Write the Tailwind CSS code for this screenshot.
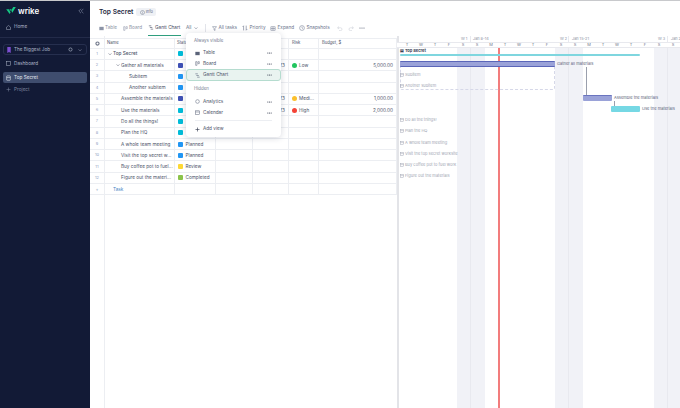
<!DOCTYPE html>
<html>
<head>
<meta charset="utf-8">
<script src="https://cdn.jsdelivr.net/npm/@tailwindcss/browser@4"></script>
</head>
<body class="font-['Inter',sans-serif] overflow-hidden">
<div class="relative w-[680px] h-[408px] flex border-t border-[#c8c9cc] bg-white text-[4.7px] text-[#3a4154] overflow-hidden">

  <!-- sidebar -->
  <aside class="w-[90px] shrink-0 bg-[#121a36] text-[#aeb6c8] flex flex-col px-[3px]">
    <div class="h-[19px] flex items-center justify-between pl-[3px] pr-[3px]">
      <div class="flex items-center gap-[2px]">
        <svg class="w-[10px] h-[7px]" viewBox="0 0 11 8"><path d="M0 2.5h3.2L5 6.2 4 8z" fill="#16c784"/><path d="M3.6 2.5h2.6L5.4 4.6zM6.6 2.5 8 0h3L7 6.6 5.9 4.2z" fill="#16c784"/></svg>
        <span class="text-[8px] font-semibold text-white leading-none">wrike</span>
      </div>
      <svg class="w-[6px] h-[6px] text-[#8791a8]" viewBox="0 0 6 6" fill="none" stroke="currentColor" stroke-width=".6"><path d="M3 .8.8 3 3 5.2M5.4.8 3.2 3l2.2 2.2"/></svg>
    </div>
    <div class="h-[14px] flex items-center gap-[3px] pl-[3px]">
      <svg class="w-[5px] h-[5px]" viewBox="0 0 6 6" fill="none" stroke="currentColor" stroke-width=".6"><path d="M.6 2.6 3 .6l2.4 2v2.8H.6z"/></svg>
      <span>Home</span>
    </div>
    <div class="h-px bg-[#232b49] mt-[3px] -mx-[3px]"></div>
    <div class="mt-[6px] h-[11px] rounded-[3px] border border-[#262f4e] flex items-center pl-[3px] pr-[4px] gap-[3px]">
      <svg class="w-[4px] h-[6px]" viewBox="0 0 4 6"><path d="M.3 0h3.4v6L2 5 .3 6z" fill="#7c4fd0"/></svg>
      <span class="grow">The Biggest Job</span>
      <svg class="w-[5px] h-[5px]" viewBox="0 0 6 6" fill="none" stroke="currentColor" stroke-width=".8"><circle cx="3" cy="3" r="1.9"/></svg>
      <svg class="w-[4px] h-[4px] ml-[2px]" viewBox="0 0 4 4" fill="none" stroke="currentColor" stroke-width=".5"><path d="M.6 1.4 2 2.8l1.4-1.4"/></svg>
    </div>
    <div class="mt-[3px] h-[11px] flex items-center gap-[3px] pl-[3px]">
      <svg class="w-[5px] h-[5px]" viewBox="0 0 6 6" fill="none" stroke="currentColor" stroke-width=".6"><rect x=".8" y=".6" width="4.4" height="4.8"/></svg>
      <span>Dashboard</span>
    </div>
    <div class="mt-[3px] h-[11px] rounded-[2px] bg-[#3f4d6e] text-[#e4e8f0] flex items-center gap-[3px] pl-[3px]">
      <svg class="w-[5px] h-[6px]" viewBox="0 0 6 7" fill="none" stroke="currentColor" stroke-width=".7"><rect x=".8" y="1" width="4.4" height="5.2" rx=".5"/><path d="M.8 3h4.4"/></svg>
      <span>Top Secret</span>
    </div>
    <div class="mt-[1px] h-[11px] flex items-center gap-[3px] pl-[3px] text-[#7d869e]">
      <svg class="w-[5px] h-[5px]" viewBox="0 0 6 6" fill="none" stroke="currentColor" stroke-width=".6"><path d="M3 .6v4.8M.6 3h4.8"/></svg>
      <span>Project</span>
    </div>
  </aside>

  <!-- main -->
  <main class="grow min-w-0 flex flex-col">
    <div class="h-[19px] pl-[9px] flex items-end gap-[3px]">
      <h1 class="text-[6.6px] font-semibold text-[#1f2a44] leading-[13px] mb-[1px]">Top Secret</h1>
      <div class="h-[8px] w-[20px] mb-[4px] rounded-[2px] bg-[#eff1f5] flex items-center justify-center gap-[1px] text-[4px] text-[#5a6378]">
        <svg class="w-[5px] h-[5px]" viewBox="0 0 6 6" fill="none" stroke="currentColor" stroke-width=".5"><circle cx="3" cy="3" r="2.4"/><path d="M3 2.6v1.8M3 1.5v.5"/></svg>
        <span>Info</span>
      </div>
    </div>

    <!-- toolbar -->
    <div class="h-[16px] pl-[7px] flex items-stretch text-[#69728a] whitespace-nowrap">
      <div class="flex items-center gap-[1px] w-[26px] pl-[2px] text-[#8b93a6]">
        <svg class="w-[5px] h-[5px]" viewBox="0 0 6 6" fill="currentColor"><path d="M.4 1h5.2v4H.4z"/></svg><span>Table</span>
      </div>
      <div class="flex items-center gap-[1px] w-[25px] text-[#8b93a6]">
        <svg class="w-[5px] h-[5px]" viewBox="0 0 6 6" fill="none" stroke="currentColor" stroke-width=".6"><path d="M.8.8h1.6v4.4H.8zM3.6.8h1.6v2.4H3.6z"/></svg><span>Board</span>
      </div>
      <div class="flex items-center gap-[1px] w-[33px] border-b border-[#2f9e7e] text-[#3f485e]">
        <svg class="w-[6px] h-[5px]" viewBox="0 0 6 6" fill="none" stroke="currentColor" stroke-width=".7"><path d="M.4 1h3M1.6 3h3M2.6 5h3"/></svg><span>Gantt Chart</span>
      </div>
      <div class="flex items-center gap-[2px] ml-[5px] w-[14px]">
        <span>All</span>
        <svg class="w-[4px] h-[4px]" viewBox="0 0 4 4" fill="none" stroke="currentColor" stroke-width=".6"><path d="M.6 1.4 2 2.8l1.4-1.4"/></svg>
      </div>
      <div class="w-px h-[8px] self-center bg-[#e2e4ea] mr-[6px] ml-[5px]"></div>
      <div class="flex items-center gap-[1.5px] w-[30px]">
        <svg class="w-[5px] h-[5px]" viewBox="0 0 6 6" fill="none" stroke="currentColor" stroke-width=".6"><path d="M.6.8h4.8L3.6 3v2.4L2.4 4.6V3z"/></svg><span>All tasks</span>
      </div>
      <div class="flex items-center gap-[1.5px] w-[28px]">
        <svg class="w-[6px] h-[6px]" viewBox="0 0 6 6" fill="none" stroke="currentColor" stroke-width=".6"><path d="M1.6 5.4V.8L.6 1.8M4.2.6v4.6l1-1"/></svg><span>Priority</span>
      </div>
      <div class="flex items-center gap-[1.5px] w-[29px]">
        <svg class="w-[6px] h-[5px]" viewBox="0 0 6 6" fill="none" stroke="currentColor" stroke-width=".6"><rect x=".5" y="1" width="5" height="4"/><path d="M.5 3h5M3 1v4"/></svg><span>Expand</span>
      </div>
      <div class="flex items-center gap-[1.5px] w-[38px]">
        <svg class="w-[6px] h-[6px]" viewBox="0 0 6 6" fill="none" stroke="currentColor" stroke-width=".5"><circle cx="3" cy="3" r="2.4"/><path d="M3 1.6V3l1 .6"/></svg><span>Snapshots</span>
      </div>
      <div class="flex items-center gap-[5px] text-[#c4c8d2]">
        <svg class="w-[6px] h-[5px]" viewBox="0 0 6 5" fill="none" stroke="currentColor" stroke-width=".5"><path d="M2 .5.6 1.8 2 3M.6 1.8h3a1.4 1.4 0 0 1 0 2.8H2"/></svg>
        <svg class="w-[6px] h-[5px]" viewBox="0 0 6 5" fill="none" stroke="currentColor" stroke-width=".5"><path d="M4 .5l1.4 1.3L4 3M5.4 1.8h-3a1.4 1.4 0 0 0 0 2.8H4"/></svg>
        <svg class="w-[6px] h-[2px] text-[#5a6378]" viewBox="0 0 6 2" fill="currentColor"><circle cx="1" cy="1" r=".6"/><circle cx="3" cy="1" r=".6"/><circle cx="5" cy="1" r=".6"/></svg>
      </div>
    </div>

    <div class="grow flex min-h-0">
      <!-- table -->
      <section class="w-[307px] shrink-0 relative pt-[1.5px]">
        <div id="table" class="text-[#4a5268]"></div>
        <div class="absolute left-[14px] top-0 bottom-0 w-px bg-[#eceef2]"></div>
      </section>

      <!-- gantt -->
      <section class="grow relative overflow-hidden">
        <div class="absolute left-0 top-0 bottom-0 w-[1.5px] bg-[#e3e4e8]"></div>
        <div class="absolute left-[60px] w-[28px] top-[12px] bottom-0 bg-[#f1f2f7]"></div>
        <div class="absolute left-[158px] w-[28px] top-[12px] bottom-0 bg-[#f1f2f7]"></div>
        <div class="absolute left-[257px] w-[28px] top-[12px] bottom-0 bg-[#f1f2f7]"></div>
        <div class="absolute left-[73px] top-0 bottom-0 w-px bg-[#e8e9ef]"></div>
        <div class="absolute left-[171px] top-0 bottom-0 w-px bg-[#e8e9ef]"></div>
        <div class="absolute left-[270px] top-0 bottom-0 w-px bg-[#e8e9ef]"></div>
        <div class="absolute left-[101px] top-[12px] bottom-0 w-[1.5px] bg-[#f27c7c]"></div>

        <div class="relative h-[6px] text-[3.8px] text-[#8a91a3] leading-[6px]">
          <span class="absolute left-[64px] top-0">W 1</span><span class="absolute left-[76px] top-0">Jan 8-14</span>
          <span class="absolute left-[163px] top-0">W 2</span><span class="absolute left-[175px] top-0">Jan 15-21</span>
          <span class="absolute left-[261px] top-0">W 3</span><span class="absolute left-[274px] top-0 whitespace-nowrap">Jan 2</span>
        </div>
        <div id="days" class="relative flex pl-[3px] h-[6px] border-y border-[#e8e9ee] text-[4px] text-[#6e7588] leading-[4px] bg-white"></div>

        <div class="absolute left-[3px] top-[18px] w-[240px] h-[1.5px] rounded-full bg-[#7fd6df]"></div>
        <span class="absolute left-[3px] top-[13px] text-[4px] font-bold text-[#3a4154] leading-none whitespace-nowrap">▤ Top Secret</span>

        <div class="absolute left-[3px] top-[25px] w-[155px] h-[6px] rounded-[1px] bg-[#9aa2d8] border-y border-[#5b66b8]"></div>
        <span class="absolute left-[160px] top-[25px] leading-[6px] text-[#5a6378] text-[4px] whitespace-nowrap">Gather all materials</span>
        <div class="absolute left-[3px] top-[31px] w-[155px] h-[23px] border border-t-0 border-dashed border-[#d6d8e8] rounded-b-[2px]"></div>
        <div class="absolute left-[189px] top-[31px] w-px h-[28px] bg-[#9a9fad]"></div>

        <div class="absolute left-[186px] top-[59px] w-[29px] h-[5.5px] rounded-[1px] bg-[#9aa2d8] border-t border-[#6a74bf]"></div>
        <span class="absolute left-[217px] top-[59px] leading-[6px] text-[#5a6378] text-[4px] whitespace-nowrap">Assemble the materials</span>
        <div class="absolute left-[217px] top-[65px] w-px h-[5px] bg-[#9a9fad]"></div>
        <div class="absolute left-[214px] top-[70px] w-[29px] h-[6px] rounded-[1px] bg-[#76d8e4]"></div>
        <span class="absolute left-[245px] top-[70px] leading-[6px] text-[#5a6378] text-[4px] whitespace-nowrap">Use the materials</span>

        <div id="labels" class="text-[4px] text-[#a0a5b2]"></div>
      </section>
    </div>
  </main>

  <!-- views dropdown -->
  <div class="absolute left-[186px] top-[32px] w-[95px] h-[104px] rounded-[4px] bg-white shadow-[0_1px_6px_rgba(30,40,70,0.18)] flex flex-col text-[#4a5268]">
    <div class="h-[15px] pl-[8px] pt-[5px] leading-[6px] text-[#747c90] text-[4.4px]">Always visible</div>
    <div class="h-[10px] flex items-center pl-[9px] pr-[9px] gap-[3px]">
      <svg class="w-[5px] h-[5px] text-[#5a6378]" viewBox="0 0 6 6" fill="currentColor"><path d="M.4 1h5.2v4H.4z"/></svg><span class="grow">Table</span><svg class="w-[5px] h-[2px] text-[#3a4154]" viewBox="0 0 6 2" fill="currentColor"><circle cx="1" cy="1" r=".7"/><circle cx="3" cy="1" r=".7"/><circle cx="5" cy="1" r=".7"/></svg>
    </div>
    <div class="h-[11px] flex items-center pl-[9px] pr-[9px] gap-[3px]">
      <svg class="w-[5px] h-[5px] text-[#5a6378]" viewBox="0 0 6 6" fill="none" stroke="currentColor" stroke-width=".6"><path d="M.8.8h1.6v4.4H.8zM3.6.8h1.6v2.4H3.6z"/></svg><span class="grow">Board</span><svg class="w-[5px] h-[2px] text-[#3a4154]" viewBox="0 0 6 2" fill="currentColor"><circle cx="1" cy="1" r=".7"/><circle cx="3" cy="1" r=".7"/><circle cx="5" cy="1" r=".7"/></svg>
    </div>
    <div class="h-[12px] flex items-center pl-[8px] pr-[8px] gap-[3px] rounded-[3px] bg-[#e9f3f0] border border-[#b5dccf]">
      <svg class="w-[5px] h-[5px] text-[#5a6378]" viewBox="0 0 6 6" fill="none" stroke="currentColor" stroke-width=".7"><path d="M.4 1h3M1.6 3h3M2.6 5h3"/></svg><span class="grow">Gantt Chart</span><svg class="w-[5px] h-[2px] text-[#3a4154]" viewBox="0 0 6 2" fill="currentColor"><circle cx="1" cy="1" r=".7"/><circle cx="3" cy="1" r=".7"/><circle cx="5" cy="1" r=".7"/></svg>
    </div>
    <div class="h-[15px] pl-[8px] pt-[5px] leading-[6px] text-[#747c90] text-[4.4px]">Hidden</div>
    <div class="h-[11px] flex items-center pl-[9px] pr-[9px] gap-[3px]">
      <svg class="w-[5px] h-[5px] text-[#5a6378]" viewBox="0 0 6 6" fill="none" stroke="currentColor" stroke-width=".6"><circle cx="3" cy="3" r="2.2"/></svg><span class="grow">Analytics</span><svg class="w-[5px] h-[2px] text-[#3a4154]" viewBox="0 0 6 2" fill="currentColor"><circle cx="1" cy="1" r=".7"/><circle cx="3" cy="1" r=".7"/><circle cx="5" cy="1" r=".7"/></svg>
    </div>
    <div class="h-[11px] flex items-center pl-[9px] pr-[9px] gap-[3px]">
      <svg class="w-[5px] h-[5px] text-[#5a6378]" viewBox="0 0 6 6" fill="none" stroke="currentColor" stroke-width=".6"><rect x=".7" y="1" width="4.6" height="4.4"/><path d="M.7 2.4h4.6"/></svg><span class="grow">Calendar</span><svg class="w-[5px] h-[2px] text-[#3a4154]" viewBox="0 0 6 2" fill="currentColor"><circle cx="1" cy="1" r=".7"/><circle cx="3" cy="1" r=".7"/><circle cx="5" cy="1" r=".7"/></svg>
    </div>
    <div class="h-px bg-[#eceef2] mx-[9px] mt-[2px]"></div>
    <div class="h-[16px] flex items-center pl-[9px] gap-[3px]">
      <svg class="w-[5px] h-[5px] text-[#3a4154]" viewBox="0 0 6 6" fill="none" stroke="currentColor" stroke-width=".8"><path d="M3 .6v4.8M.6 3h4.8"/></svg><span>Add view</span>
    </div>
  </div>
</div>

<script>
  var rowClass = "grid grid-cols-[15px_70px_41px_37px_36px_30px_78px] h-[11.27px] border-b border-[#eceef2] items-stretch";
  var cellClass = "flex items-center border-r border-[#eceef2] whitespace-nowrap overflow-hidden";

  var tasks = [
    ["1", "Top Secret", 8, "#00bcd8", "", "", "", "", "", true],
    ["2", "Gather all materials", 16, "#3f51b5", "", "01/13/23", "#22c55e", "Low", "5,000.00", true],
    ["3", "Subitem", 24, "#2196f3", "", "", "", "", ""],
    ["4", "Another subitem", 24, "#2196f3", "", "", "", "", ""],
    ["5", "Assemble the materials", 16, "#3f51b5", "", "01/18/23", "#fbc02d", "Medi...", "1,000.00"],
    ["6", "Use the materials", 16, "#00bcd8", "", "01/20/23", "#f44336", "High", "2,000.00"],
    ["7", "Do all the things!", 16, "#00bcd8", "", "", "", "", ""],
    ["8", "Plan the HQ", 16, "#00bcd8", "", "", "", "", ""],
    ["9", "A whole team meeting", 16, "#2196f3", "Planned", "", "", "", ""],
    ["10", "Visit the top secret w...", 16, "#2196f3", "Planned", "", "", "", ""],
    ["11", "Buy coffee pot to fuel...", 16, "#fdd835", "Review", "", "", "", ""],
    ["12", "Figure out the materi...", 16, "#8bc34a", "Completed", "", "", "", ""]
  ];

  var html = '<div class="' + rowClass + ' border-t">' +
    '<div class="' + cellClass + ' justify-center"><svg class="w-[5px] h-[5px] text-[#6e7588]" viewBox="0 0 6 6" fill="none" stroke="currentColor" stroke-width="1.3"><circle cx="3" cy="3" r="1.9"/></svg></div>' +
    '<div class="' + cellClass + ' pl-[2px] text-[4.2px]">Name</div><div class="' + cellClass + ' pl-[2px] text-[4.2px]">Status</div><div class="' + cellClass + '"></div><div class="' + cellClass + '"></div>' +
    '<div class="' + cellClass + ' pl-[3px] text-[4.2px]">Risk</div><div class="' + cellClass + ' pl-[3px] text-[4.2px]">Budget, $</div></div>';

  tasks.forEach(function (t) {
    var arrow = t[9] ? '<svg class="w-[4px] h-[4px] shrink-0 absolute -ml-[5.5px]" viewBox="0 0 4 4" fill="none" stroke="currentColor" stroke-width=".5"><path d="M.6 1.4 2 2.8l1.4-1.4"/></svg>' : '';
    var dot = t[6] ? '<span class="w-[5px] h-[5px] rounded-full mr-[2px]" style="background:' + t[6] + '"></span>' : '';
    html += '<div class="' + rowClass + '">' +
      '<div class="' + cellClass + ' justify-center text-[4px] text-[#8fa0bf]">' + t[0] + '</div>' +
      '<div class="' + cellClass + (t[0] == "1" ? ' font-medium' : '') + '" style="padding-left:' + t[2] + 'px">' + arrow + t[1] + '</div>' +
      '<div class="' + cellClass + ' pl-[3px] gap-[2.5px]"><span class="w-[5px] h-[5px] rounded-[1px] shrink-0" style="background:' + t[3] + '"></span>' + t[4] + '</div>' +
      '<div class="' + cellClass + '"></div>' +
      '<div class="' + cellClass + ' justify-end pr-[3px]">' + t[5] + '</div>' +
      '<div class="' + cellClass + ' pl-[3px]">' + dot + t[7] + '</div>' +
      '<div class="' + cellClass + ' justify-end pr-[3px]">' + t[8] + '</div></div>';
  });
  html += '<div class="' + rowClass + '"><div class="' + cellClass + ' justify-center text-[#8fa0bf]">+</div><div class="' + cellClass + ' pl-[8px] text-[#3f7fc4]">Task</div>' +
    '<div class="' + cellClass + '"></div><div class="' + cellClass + '"></div><div class="' + cellClass + '"></div><div class="' + cellClass + '"></div><div class="' + cellClass + '"></div></div>';
  document.getElementById("table").innerHTML = html;

  var dayNames = "TWTFSSMTWTFSSMTWTFSS";
  var daysHtml = "";
  for (var i = 0; i < dayNames.length; i++) {
    daysHtml += '<span class="w-[14px] shrink-0 text-center">' + dayNames[i] + '</span>';
  }
  document.getElementById("days").innerHTML = daysHtml;

  var labels = [[36, "Subitem"], [47, "Another subitem"], [81, "Do all the things!"], [92, "Plan the HQ"], [104, "A whole team meeting"], [115, "Visit the top secret worksite"], [126, "Buy coffee pot to fuel work"], [137, "Figure out the materials"]];
  var labelsHtml = "";
  labels.forEach(function (l) {
    labelsHtml += '<div class="absolute left-[3px] flex items-center gap-[1px] whitespace-nowrap leading-[6px]" style="top:' + l[0] + 'px"><svg class="w-[4px] h-[4px]" viewBox="0 0 6 6" fill="none" stroke="currentColor" stroke-width=".7"><rect x=".7" y="1" width="4.6" height="4.4"/><path d="M.7 2.4h4.6"/></svg>' + l[1] + '</div>';
  });
  document.getElementById("labels").innerHTML = labelsHtml;
</script>
</body>
</html>
